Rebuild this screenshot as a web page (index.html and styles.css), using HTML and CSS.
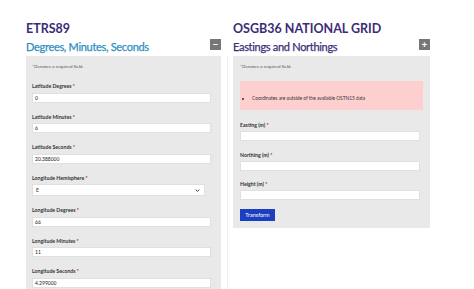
FILE: index.html
```html
<!DOCTYPE html>
<html>
<head>
<meta charset="utf-8">
<link rel="stylesheet" href="styles.css">
</head>
<body>
<div class="page">
  <section class="col col-left">
    <h2 class="sys">ETRS89</h2>
    <div class="sub-head">
      <h3 class="fmt fmt-teal">Degrees, Minutes, Seconds</h3>
      <span class="toggle">&minus;</span>
    </div>
    <div class="panel">
      <p class="note"><span class="req">*</span>Denotes a required field.</p>
      <div class="field"><label>Latitude Degrees <span class="req">*</span></label><div class="input">0</div></div>
      <div class="field"><label>Latitude Minutes <span class="req">*</span></label><div class="input">6</div></div>
      <div class="field"><label>Latitude Seconds <span class="req">*</span></label><div class="input">20.388000</div></div>
      <div class="field"><label>Longitude Hemisphere <span class="req">*</span></label><div class="select">E<svg class="chev" viewBox="0 0 8 5" width="5" height="3"><path d="M1 1l3 3 3-3" fill="none" stroke="#333" stroke-width="1.6"/></svg></div></div>
      <div class="field"><label>Longitude Degrees <span class="req">*</span></label><div class="input">66</div></div>
      <div class="field"><label>Longitude Minutes <span class="req">*</span></label><div class="input">11</div></div>
      <div class="field"><label>Longitude Seconds <span class="req">*</span></label><div class="input">4.299000</div></div>
    </div>
  </section>
  <div class="divider"></div>
  <section class="col col-right">
    <h2 class="sys">OSGB36 NATIONAL GRID</h2>
    <div class="sub-head">
      <h3 class="fmt">Eastings and Northings</h3>
      <span class="toggle">+</span>
    </div>
    <div class="panel panel-right">
      <p class="note"><span class="req">*</span>Denotes a required field.</p>
      <div class="alert"><ul><li>Coordinates are outside of the available OSTN15 data</li></ul></div>
      <div class="field"><label>Easting (m) <span class="req">*</span></label><div class="input"></div></div>
      <div class="field"><label>Northing (m) <span class="req">*</span></label><div class="input"></div></div>
      <div class="field"><label>Height (m) <span class="req">*</span></label><div class="input"></div></div>
      <button class="btn">Transform</button>
    </div>
  </section>
</div>
</body>
</html>
```
FILE: styles.css
```css
* { box-sizing: border-box; }
html, body { margin: 0; padding: 0; background: #fff; }
body { font-family: "Lato", "Open Sans", sans-serif; color: #333; width: 474px; height: 289px; overflow: hidden; }
.page { display: flex; padding: 21px 0 0 26px; }
.col-left { width: 195px; }
.col-right { width: 197px; }
.divider { width: 1px; margin: 35px 5px 0 6px; background: #eeeeee; height: 260px; }
.sys { margin: 0; font-size: 12.5px; line-height: 16px; font-weight: 700; color: #3b2c78; }
.sub-head { display: flex; justify-content: space-between; align-items: center; height: 19px; }
.fmt { margin: 0; font-size: 11px; line-height: 16px; font-weight: 400; letter-spacing: -0.3px; color: #3b2c78; -webkit-text-stroke: 0.25px currentColor; }
.fmt-teal { color: #2f8fc1; }
.toggle { width: 11px; height: 11px; background: #777; color: #fff; font-size: 10px; line-height: 11px; text-align: center; font-weight: 700; margin-top: -4px; }
.panel { background: #e9e9e9; padding: 7px 10px 10px 6px; }
.panel-right { padding: 7px 10px 7px 7px; }
.note { margin: 0 0 14px; font-size: 4.6px; line-height: 6px; color: #555; }
.panel-right .note { margin-bottom: 12px; }
.req { color: #d0021b; }
.field { margin-bottom: 11px; }
.panel-right .field { margin-bottom: 10.5px; }
.field label { display: block; font-size: 5.2px; line-height: 6px; font-weight: 700; color: #333; margin-bottom: 3.5px; }
.panel-right .field label { margin-bottom: 3px; }
.input { height: 10px; background: #fff; border: 0.5px solid #e0e0e0; font-size: 5px; line-height: 9px; padding-left: 2px; color: #222; }
.select { height: 12px; width: 173px; background: #fff; border: 0.5px solid #e0e0e0; font-size: 5px; line-height: 11px; padding: 0 4px 0 3px; display: flex; justify-content: space-between; align-items: center; }
.alert { background: #fdcfcf; margin: 0 -3px 12px 0; padding: 14px 0 9px 0; }
.alert ul { margin: 0; padding-left: 12px; font-size: 4.8px; line-height: 6px; color: #333; }
.btn { background: #1c3fc0; color: #fff; border: none; font-family: inherit; font-size: 5.5px; height: 12px; width: 35px; padding: 0; margin-top: -1.5px; display: block; }
```
